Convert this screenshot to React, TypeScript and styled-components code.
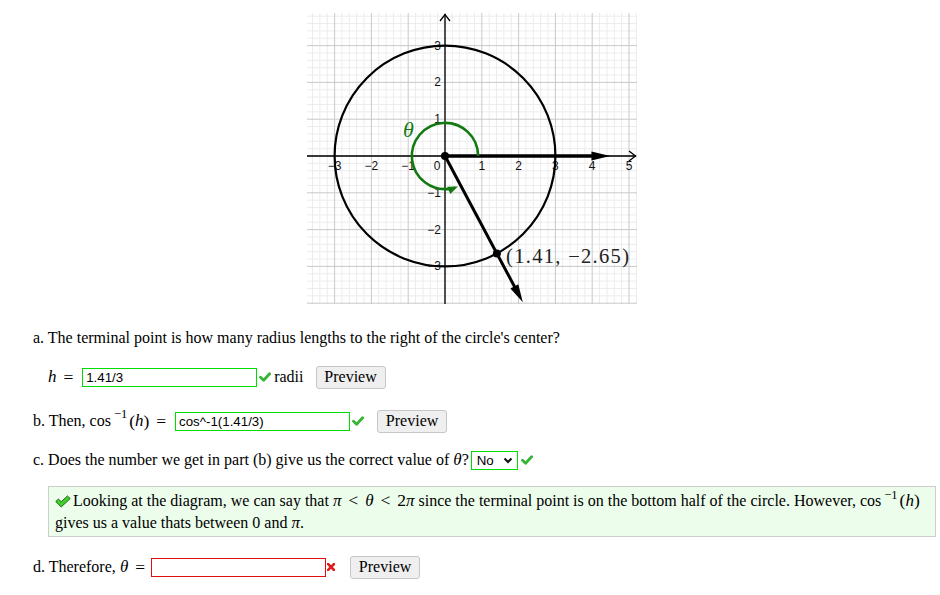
import React from 'react';
import styled, { createGlobalStyle } from 'styled-components';

const GlobalStyle = createGlobalStyle`
  html, body { margin: 0; padding: 0; background: #fff; }
  body {
    font-family: "Liberation Serif", "Times New Roman", serif;
    font-size: 16px;
    color: #000;
  }
`;

const Page = styled.div`
  width: 940px;
  padding-top: 13px;
  box-sizing: border-box;
`;

const GraphRow = styled.div`
  display: flex;
  justify-content: center;
  padding-left: 3px;
`;

const Para = styled.div<{ $mt: number }>`
  margin-top: ${(p) => p.$mt}px;
  padding-left: 33px;
  line-height: 20px;
  white-space: nowrap;
`;

const Row = styled.div<{ $mt: number; $pl?: number }>`
  display: flex;
  align-items: center;
  height: 24px;
  margin-top: ${(p) => p.$mt}px;
  padding-left: ${(p) => p.$pl ?? 33}px;
  white-space: nowrap;
`;

const MI = styled.span`
  font-style: italic;
  font-size: 17px;
`;

const Rel = styled.span`
  display: inline-block;
  width: 13.7px;
  text-align: center;
  font-size: 17.5px;
  margin: 0 5px;
`;

const Sup = styled.span`
  font-size: 12.5px;
  position: relative;
  top: -7px;
  margin: 0 2px 0 3px;
`;

const Paren = styled.span`
  font-size: 17.5px;
`;

const AnswerInput = styled.div<{ $color: string; $ml: number }>`
  box-sizing: border-box;
  width: 175px;
  height: 19px;
  border: 1px solid ${(p) => p.$color};
  margin-left: ${(p) => p.$ml}px;
  padding: 0 3px;
  font-family: "Liberation Sans", Arial, sans-serif;
  font-size: 13.3px;
  line-height: 17px;
  color: #000;
`;

const Mark = styled.span<{ $ml: number; $mr: number }>`
  display: inline-flex;
  align-items: center;
  margin-left: ${(p) => p.$ml}px;
  margin-right: ${(p) => p.$mr}px;
`;

const Unit = styled.span`
  margin-right: 12px;
`;

const PreviewButton = styled.button`
  box-sizing: border-box;
  width: 70px;
  height: 23px;
  padding: 0;
  background: #efefef;
  border: 1px solid #c6c6c6;
  border-radius: 3px;
  font-family: "Liberation Serif", "Times New Roman", serif;
  font-size: 16px;
  color: #000;
  line-height: 20px;
`;

const SelectBox = styled.div`
  box-sizing: border-box;
  display: flex;
  align-items: center;
  justify-content: space-between;
  width: 47px;
  height: 19px;
  margin-left: 2px;
  padding: 0 4px 0 5px;
  border: 1px solid #00dd00;
  font-family: "Liberation Sans", Arial, sans-serif;
  font-size: 13.3px;
`;

const Feedback = styled.div`
  box-sizing: border-box;
  margin: 14px 0 0 48px;
  width: 888px;
  height: 51px;
  padding: 4px 6px;
  background: #edfdec;
  border: 1px solid #cdcdcd;
  line-height: 21px;
  white-space: nowrap;
`;

const FeedbackLine = styled.div`
  display: flex;
  align-items: center;
  height: 21px;
`;

const BigCheckWrap = styled.span`
  display: inline-flex;
  margin-right: 2px;
`;

const SmallCheck = () => (
  <svg width="12" height="10" viewBox="0 0 12 10">
    <path d="M1.5 5.3 L4.6 8.2 L10.6 1.8" fill="none" stroke="#36b436" strokeWidth="2.8" strokeLinecap="round" strokeLinejoin="round" />
  </svg>
);

const BigCheck = () => (
  <svg width="16" height="13" viewBox="0 0 17 13">
    <path d="M0.8 6.6 L3.6 3.9 L6.6 6.7 L13.2 0.6 L16.2 3.4 L6.6 12.3 Z" fill="#3ed12a" stroke="#1d5e17" strokeWidth="1" strokeLinejoin="round" />
  </svg>
);

const RedX = () => (
  <svg width="8" height="8" viewBox="0 0 8 8">
    <path d="M1 1 L7 7 M7 1 L1 7" stroke="#dd1f1f" strokeWidth="2.6" strokeLinecap="square" />
  </svg>
);

const Chevron = () => (
  <svg width="10" height="7" viewBox="0 0 10 7">
    <path d="M1.5 1.5 L5 5 L8.5 1.5" fill="none" stroke="#111" strokeWidth="2" />
  </svg>
);

/* Graph */
const W = 330;
const H = 291;
const OX = 138;
const OY = 143;
const U = 36.8;

const Graph = () => {
  const minor: React.ReactNode[] = [];
  const major: React.ReactNode[] = [];
  for (let k = -19; k <= 26; k++) {
    const x = OX + (k * U) / 5;
    if (x < 0 || x > W) continue;
    const isMajor = k % 5 === 0;
    (isMajor ? major : minor).push(
      <line key={'v' + k} x1={x} y1={0} x2={x} y2={H} stroke={isMajor ? '#c9c9c9' : '#ececec'} strokeWidth={1} />
    );
  }
  for (let k = -20; k <= 20; k++) {
    const y = OY - (k * U) / 5;
    if (y < 0 || y > H) continue;
    const isMajor = k % 5 === 0;
    (isMajor ? major : minor).push(
      <line key={'h' + k} x1={0} y1={y} x2={W} y2={y} stroke={isMajor ? '#c9c9c9' : '#ececec'} strokeWidth={1} />
    );
  }
  const xl = [-3, -2, -1, 1, 2, 3, 4, 5];
  const yl = [3, 2, 1, -1, -2, -3];
  const fmt = (n: number) => (n < 0 ? '\u2212' + Math.abs(n) : String(n));

  const r = 0.9 * U;
  const endA = (-67 * Math.PI) / 180;
  const preA = (-80 * Math.PI) / 180;
  const ex = OX + r * Math.cos(preA);
  const ey = OY - r * Math.sin(preA);
  const tipX = OX + r * Math.cos(endA);
  const tipY = OY - r * Math.sin(endA);
  const tx = -Math.sin(endA);
  const ty = -Math.cos(endA);
  const nx = -ty;
  const ny = tx;
  const aL = 10;
  const aW = 4;
  const gbx = tipX - tx * aL;
  const gby = tipY - ty * aL;

  const dx = 1.41 / 3;
  const dy = 2.65 / 3;
  const tTip = 4.5 * U;
  const tBase = tTip - 18;
  const rtx = OX + dx * tTip;
  const rty = OY + dy * tTip;
  const rbx = OX + dx * tBase;
  const rby = OY + dy * tBase;
  const pnx = dy;
  const pny = -dx;

  const px = OX + 1.41 * U;
  const py = OY + 2.65 * U;

  return (
    <svg width={W} height={H} viewBox={`0 0 ${W} ${H}`}>
      {minor}
      {major}
      <line x1={0} y1={OY} x2={W - 1} y2={OY} stroke="#000" strokeWidth={1.3} />
      <path d={`M${W - 8} ${OY - 5} L${W - 1.5} ${OY} L${W - 8} ${OY + 5}`} fill="none" stroke="#000" strokeWidth={1.3} />
      <line x1={OX} y1={H} x2={OX} y2={1} stroke="#000" strokeWidth={1.3} />
      <path d={`M${OX - 5} 8 L${OX} 1.5 L${OX + 5} 8`} fill="none" stroke="#000" strokeWidth={1.3} />
      <g fontFamily='"Liberation Sans", Arial, sans-serif' fontSize="12" fill="#111">
        {xl.map((k) => (
          <text key={'xl' + k} x={OX + k * U} y={OY + 14} textAnchor="middle">
            {fmt(k)}
          </text>
        ))}
        <text x={OX - 8} y={OY + 14} textAnchor="middle">0</text>
        {yl.map((k) => (
          <text key={'yl' + k} x={OX - 4} y={OY - k * U + 4} textAnchor="end">
            {fmt(k)}
          </text>
        ))}
      </g>
      <circle cx={OX} cy={OY} r={3 * U} fill="none" stroke="#000" strokeWidth={2.2} />
      <line x1={OX} y1={OY} x2={OX + 4.05 * U} y2={OY} stroke="#000" strokeWidth={3.5} />
      <polygon points={`${OX + 4.49 * U},${OY} ${OX + 3.98 * U},${OY - 4.5} ${OX + 3.98 * U},${OY + 4.5}`} fill="#000" />
      <line x1={OX} y1={OY} x2={rbx + dx * 3} y2={rby + dy * 3} stroke="#000" strokeWidth={3} />
      <polygon
        points={`${rtx},${rty} ${rbx + pnx * 4.5},${rby + pny * 4.5} ${rbx - pnx * 4.5},${rby - pny * 4.5}`}
        fill="#000"
      />
      <path
        d={`M${OX + r} ${OY} A${r} ${r} 0 1 0 ${ex} ${ey} A${r} ${r} 0 0 0 ${gbx} ${gby}`}
        fill="none"
        stroke="#137a13"
        strokeWidth={2.6}
      />
      <polygon
        points={`${tipX},${tipY} ${gbx + nx * aW},${gby + ny * aW} ${gbx - nx * aW},${gby - ny * aW}`}
        fill="#137a13"
      />
      <circle cx={OX} cy={OY} r={4} fill="#000" />
      <circle cx={px} cy={py} r={4} fill="#000" />
      <text
        x={96}
        y={124}
        fontFamily='"Liberation Serif", "Times New Roman", serif'
        fontStyle="italic"
        fontSize="22"
        fill="#137a13"
      >
        θ
      </text>
      <text
        x={199}
        y={250}
        fontFamily='"Liberation Serif", "Times New Roman", serif'
        fontSize="20.5"
        fill="#222"
        textLength={123}
        lengthAdjust="spacing"
      >
        (1.41, −2.65)
      </text>
    </svg>
  );
};

export default function App() {
  return (
    <>
      <GlobalStyle />
      <Page>
        <GraphRow>
          <Graph />
        </GraphRow>

        <Para $mt={24}>a. The terminal point is how many radius lengths to the right of the circle's center?</Para>

        <Row $mt={17} $pl={48}>
          <MI>h</MI>
          <Rel>=</Rel>
          <AnswerInput $color="#00dd00" $ml={2}>1.41/3</AnswerInput>
          <Mark $ml={2} $mr={3}>
            <SmallCheck />
          </Mark>
          <Unit>radii</Unit>
          <PreviewButton>Preview</PreviewButton>
        </Row>

        <Row $mt={20}>
          <span>b. Then, cos</span>
          <Sup>−1</Sup>
          <Paren>(</Paren>
          <MI>h</MI>
          <Paren>)</Paren>
          <Rel>=</Rel>
          <AnswerInput $color="#00dd00" $ml={2}>cos^-1(1.41/3)</AnswerInput>
          <Mark $ml={2} $mr={13}>
            <SmallCheck />
          </Mark>
          <PreviewButton>Preview</PreviewButton>
        </Row>

        <Row $mt={15}>
          <span>
            c. Does the number we get in part (b) give us the correct value of <MI>θ</MI>?
          </span>
          <SelectBox>
            <span>No</span>
            <Chevron />
          </SelectBox>
          <Mark $ml={3} $mr={0}>
            <SmallCheck />
          </Mark>
        </Row>

        <Feedback>
          <FeedbackLine>
            <BigCheckWrap>
              <BigCheck />
            </BigCheckWrap>
            <span>
              Looking at the diagram, we can say that <MI>π</MI>
              <Rel>&lt;</Rel>
              <MI>θ</MI>
              <Rel>&lt;</Rel>
              <Paren>2</Paren>
              <MI>π</MI> since the terminal point is on the bottom half of the circle. However, cos<Sup>−1</Sup>
              <Paren>(</Paren>
              <MI>h</MI>
              <Paren>)</Paren>
            </span>
          </FeedbackLine>
          <FeedbackLine>
            <span>
              gives us a value thats between 0 and <MI>π</MI>.
            </span>
          </FeedbackLine>
        </Feedback>

        <Row $mt={18}>
          <span>d. Therefore, </span>
          <MI>&nbsp;θ</MI>
          <Rel>=</Rel>
          <AnswerInput $color="#e01010" $ml={-1}></AnswerInput>
          <Mark $ml={1} $mr={15}>
            <RedX />
          </Mark>
          <PreviewButton>Preview</PreviewButton>
        </Row>
      </Page>
    </>
  );
}
